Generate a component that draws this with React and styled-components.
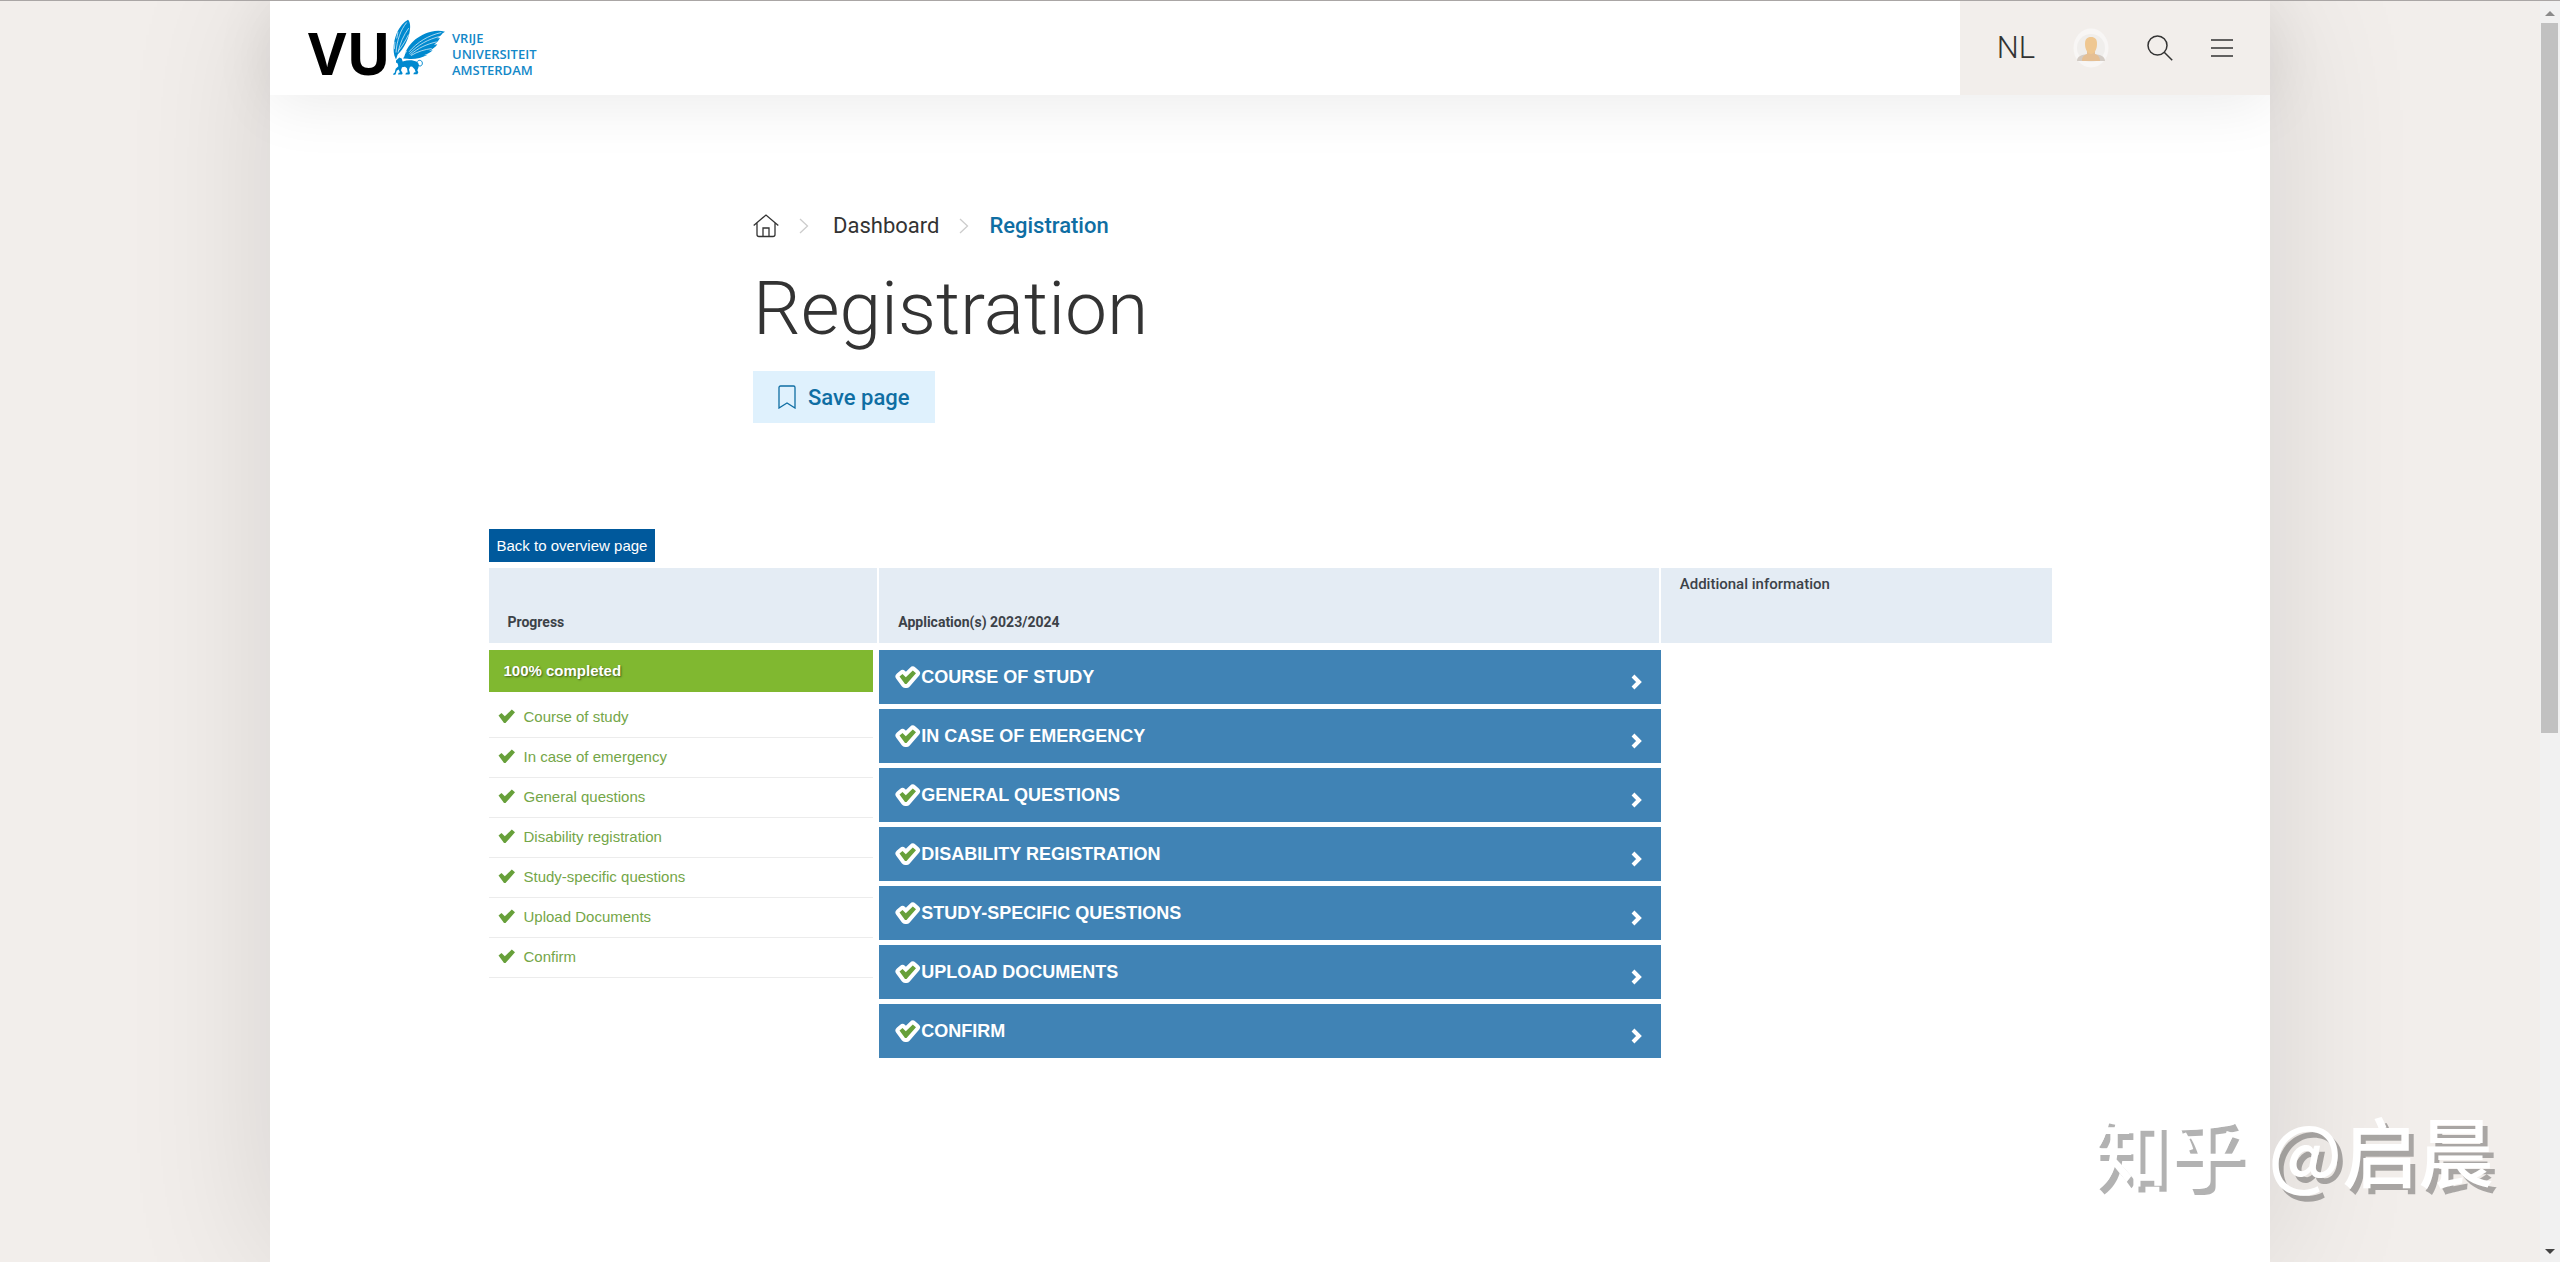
import React from 'react'
import styled, { createGlobalStyle } from 'styled-components'

const STEPS = [
  'Course of study',
  'In case of emergency',
  'General questions',
  'Disability registration',
  'Study-specific questions',
  'Upload Documents',
  'Confirm',
]

const TICK = 'M.5 6.500 3.500 4 6.800 7.300 13.800.500 17 3.200 7.500 14H6z'

const Griffin = () => (
  <svg width="52" height="57" viewBox="25 16 156 170" fill="#0089cf">
    {/* wings */}
    <path d="M70 18c-12 6-25 21-34 41-8 19-12 44-7 66l5 12 5-15c9-7 18-20 25-35 9-19 14-38 12-55-1-7-3-11-6-14z" />
    <path d="M181 54c-13-4-27-4-42 0-23 6-44 18-59 34-11 12-18 24-21 40l-4 6 14 1c20 2 42-2 60-12l-12 1c12-4 21-9 27-15l-11 2c12-6 20-12 25-20l-10 2c10-7 15-14 18-21l-8 2c8-6 13-12 15-15z" />
    {/* body and legs */}
    <path d="M34 140l10-9 7 3 3 9c16-6 32-5 43 1 6 4 7 11 4 18l-3 7 3 6-3 6H86l2-5 5-1-3-9-8-8-6 1-3 9 3 10-2 4H62l2-5 5-1-2-13-6-4-9 1-3 9 5 9-2 4H40l2-5 4-1-4-9-6 4-3 10-2 2h-6l2-5 3-1 3-12 8-8-2-8-5-3z" />
    <path
      d="M97 151c8 10 17 5 16-4-1-8-10-10-15-4"
      fill="none"
      stroke="#0089cf"
      strokeWidth="3"
    />
    {/* gaps between the feathers */}
    <g fill="none" stroke="#fff" strokeWidth="2">
      <path d="M66 26C48 48 37 78 34 116" />
      <path d="M72 43C57 64 46 88 40 116" />
      <path d="M72 62c-9 18-19 34-30 48" />
      <path d="M40 54l-4 20M31 84l-2 22" />
      <path d="M170 56c-40 9-72 29-97 58" />
      <path d="M168 67c-38 9-68 26-94 53" />
      <path d="M156 84c-30 7-55 18-79 39" />
      <path d="M141 104c-21 3-42 9-62 21" />
      <path d="M55 128l11-16M52 136l12 2" />
    </g>
  </svg>
)

const HomeIcon = () => (
  <svg width="26" height="24" viewBox="0 0 26 24" fill="none" stroke="#333" strokeWidth="1.3">
    <path d="M.7 11.6 13 1l12.300 10.600M4 9.200V20.500a2 2 0 0 0 2 2h14a2 2 0 0 0 2-2V9.200M10 22.500V14h6v8.500" />
  </svg>
)

const Chevron = () => (
  <svg width="10" height="16" viewBox="0 0 10 16" fill="none" stroke="#ccc" strokeWidth="1.3">
    <path d="M1 1l7.500 7L1 15" />
  </svg>
)

const BookmarkIcon = () => (
  <svg width="18" height="24" viewBox="0 0 18 24" fill="none" stroke="#0f6ea3" strokeWidth="1.3">
    <path d="M1 23V2.500A1.500 1.500 0 0 1 2.500 1h13A1.500 1.500 0 0 1 17 2.500V23l-8-5z" />
  </svg>
)

const AvatarIcon = () => (
  <svg width="36" height="40" viewBox="0 0 36 40">
    <ellipse cx="18" cy="20" rx="17.500" ry="19.500" fill="#f8f6f5" />
    <circle cx="18" cy="20" r="14" fill="#f0eeec" />
    <path d="M4 33c0-5 5-6 10-7v-4h8v4c5 1 10 2 10 7z" fill="#d3cbc4" />
    <path d="M9 33c0-4 2-6 5-7v-4h8v4c3 1 5 3 5 7z" fill="#e5bf94" />
    <path d="M12 16c0-5 2-7 6-7s6 2 6 7c0 6-3 10-6 10s-6-4-6-10z" fill="#efc791" />
  </svg>
)

const SearchIcon = () => (
  <svg width="26" height="26" viewBox="0 0 26 26" fill="none" stroke="#333" strokeWidth="1.500">
    <circle cx="10.500" cy="10.500" r="9.500" />
    <path d="M17.200 17.200l8 8" />
  </svg>
)

const MenuIcon = () => (
  <svg width="22" height="18" viewBox="0 0 22 18" stroke="#333" strokeWidth="1.600">
    <path d="M0 1h22M0 9h22M0 17h22" />
  </svg>
)

const Tick = () => (
  <svg width="18" height="15" viewBox="0 0 18 15">
    <path d={TICK} fill="#67a03a" />
  </svg>
)

const OutlinedTick = () => (
  <svg width="26" height="23" viewBox="-4 -4 26 23">
    <path d={TICK} fill="#fff" stroke="#fff" strokeWidth="8" strokeLinejoin="round" />
    <path d={TICK} fill="#67a03a" />
  </svg>
)

const BarArrow = () => (
  <svg width="11" height="16" viewBox="0 0 11 16" fill="none" stroke="#fff" strokeWidth="4">
    <path d="M2 2l6 6-6 6" />
  </svg>
)

const App = () => (
  <Screen>
    <GlobalStyle />
    <Backdrop>
      <Page>
        <Header>
          <Logo href="#home" aria-label="VU Vrije Universiteit Amsterdam">
            <LogoLetters>VU</LogoLetters>
            <Griffin />
            <LogoName>
              VRIJE
              <br />
              UNIVERSITEIT
              <br />
              AMSTERDAM
            </LogoName>
          </Logo>
          <Tools>
            <Language href="#nl">NL</Language>
            <ToolButton aria-label="Account">
              <AvatarIcon />
            </ToolButton>
            <ToolButton aria-label="Search">
              <SearchIcon />
            </ToolButton>
            <ToolButton aria-label="Menu">
              <MenuIcon />
            </ToolButton>
          </Tools>
        </Header>

        <Intro>
          <Breadcrumb aria-label="Breadcrumb">
            <Crumb href="#home" aria-label="Home">
              <HomeIcon />
            </Crumb>
            <Chevron />
            <Crumb href="#dashboard" $indent>
              Dashboard
            </Crumb>
            <Chevron />
            <Crumb href="#registration" $current>
              Registration
            </Crumb>
          </Breadcrumb>
          <Title>Registration</Title>
          <SaveButton>
            <BookmarkIcon />
            Save page
          </SaveButton>
        </Intro>

        <Application>
          <BackButton>Back to overview page</BackButton>
          <Columns>
            <Column>
              <ColumnHead $gap>Progress</ColumnHead>
              <Completed>100% completed</Completed>
              <StepList>
                {STEPS.map(step => (
                  <Step key={step}>
                    <Tick />
                    {step}
                  </Step>
                ))}
              </StepList>
            </Column>

            <Column>
              <ColumnHead $gap>Application(s) 2023/2024</ColumnHead>
              <Bars>
                {STEPS.map(step => (
                  <Bar key={step}>
                    <OutlinedTick />
                    <BarLabel>{step}</BarLabel>
                    <ArrowSlot>
                      <BarArrow />
                    </ArrowSlot>
                  </Bar>
                ))}
              </Bars>
            </Column>

            <Column>
              <ColumnHead $top>Additional information</ColumnHead>
            </Column>
          </Columns>
        </Application>
      </Page>
    </Backdrop>

    <Scrollbar aria-hidden="true">
      <ScrollArrow viewBox="0 0 20 22">
        <path d="M5 15l5-5 5 5z" fill="#8b8b8b" />
      </ScrollArrow>
      <Thumb />
      <Track />
      <ScrollArrow viewBox="0 0 20 22">
        <path d="M5 9l5 5 5-5z" fill="#444" />
      </ScrollArrow>
    </Scrollbar>

    <Watermark>
      <span>知乎</span>
      <span>@启晨</span>
    </Watermark>
  </Screen>
)

const GlobalStyle = createGlobalStyle`
  * {
    box-sizing: border-box;
  }

  body {
    margin: 0;
    font-family: Roboto, sans-serif;
    color: #333;
    background: #f2eeeb;
  }

  a {
    color: inherit;
    text-decoration: none;
  }

  button {
    padding: 0;
    border: 0;
    background: none;
    font: inherit;
    color: inherit;
    cursor: pointer;
  }

  svg {
    display: block;
    flex-shrink: 0;
  }
`

const Screen = styled.div`
  position: relative;
  display: flex;
  min-height: 100vh;
  border-top: 1px solid #aaa6a5;
`

const Backdrop = styled.div`
  flex: 1;
  display: flex;
  justify-content: center;
  overflow: hidden;
`

const Page = styled.div`
  width: 100%;
  max-width: 2000px;
  background: #fff;
  box-shadow: 0 0 140px rgba(0, 0, 0, 0.12);
`

const Header = styled.header`
  display: flex;
  justify-content: space-between;
  height: 94px;
  background: #fff;
  box-shadow: 0 10px 60px rgba(0, 0, 0, 0.08);
`

const Logo = styled.a`
  display: flex;
  align-items: flex-start;
  padding: 18px 0 0 38px;
`

const LogoLetters = styled.span`
  margin-top: 11px;
  width: 85px;
  font-family: 'Open Sans', sans-serif;
  font-size: 59px;
  font-weight: 700;
  line-height: 44px;
  color: #000;
`

const LogoName = styled.span`
  margin: 11px 0 0 7px;
  font-family: 'Open Sans', sans-serif;
  font-size: 13px;
  font-weight: 600;
  line-height: 16px;
  color: #1488c8;
`

const Tools = styled.div`
  display: flex;
  align-items: center;
  gap: 38px;
  padding: 0 37px;
  background: #f2eeeb;
`

const Language = styled.a`
  font-size: 31px;
  font-weight: 300;
  line-height: 36px;
`

const ToolButton = styled.button`
  display: flex;
`

const Intro = styled.section`
  width: 100%;
  max-width: 1034px;
  margin: 0 auto;
  padding-top: 115px;
`

const Breadcrumb = styled.nav`
  display: flex;
  align-items: center;
  gap: 20px;
  height: 32px;
`

const Crumb = styled.a`
  margin-left: ${p => (p.$indent ? 4 : 0)}px;
  font-size: 22px;
  font-weight: ${p => (p.$current ? 500 : 400)};
  line-height: 32px;
  color: ${p => (p.$current ? '#0f6ea3' : '#333')};
`

const Title = styled.h1`
  margin: 20px 0 17px;
  font-size: 75px;
  font-weight: 300;
  line-height: 92px;
`

const SaveButton = styled.button`
  display: flex;
  align-items: center;
  gap: 12px;
  height: 52px;
  padding: 0 25px;
  background: #dff1fd;
  font-size: 22px;
  font-weight: 500;
  color: #0f6ea3;
`

const Application = styled.section`
  width: 100%;
  max-width: 1563px;
  margin: 106px auto 0;
  font-family: 'Liberation Sans', Arial, sans-serif;
  font-size: 15px;
`

const BackButton = styled.button`
  display: block;
  height: 33px;
  padding: 0 8px;
  background: #00599c;
  color: #fff;
`

const Columns = styled.div`
  display: grid;
  grid-template-columns: 1fr 2fr 1fr;
  margin-top: 6px;
`

const Column = styled.div``

const ColumnHead = styled.h2`
  display: flex;
  align-items: ${p => (p.$top ? 'flex-start' : 'flex-end')};
  height: 75px;
  margin: 0 ${p => (p.$gap ? 2 : 0)}px 7px 0;
  padding: 6px 19px 11px;
  background: #e4ecf4;
  font-family: Roboto, sans-serif;
  font-size: ${p => (p.$top ? 15 : 14)}px;
  font-weight: ${p => (p.$top ? 500 : 700)};
  line-height: 20px;
  color: #3c4248;
`

const Completed = styled.div`
  margin-right: 6px;
  padding: 0 15px;
  background: #80b830;
  font-weight: 700;
  line-height: 42px;
  color: #fff;
  text-shadow: 1px 1px 2px rgba(0, 0, 0, 0.5);
`

const StepList = styled.ul`
  margin: 6px 6px 0 0;
  padding: 0;
  list-style: none;
`

const Step = styled.li`
  display: flex;
  align-items: center;
  gap: 8px;
  height: 40px;
  padding: 0 0 2px 9px;
  border-bottom: 1px solid #ececec;
  color: #74a648;
`

const Bars = styled.div`
  display: grid;
  gap: 5px;
`

const Bar = styled.button`
  display: flex;
  align-items: center;
  height: 54px;
  padding: 0 19px 0 16px;
  background: #4083b5;
  color: #fff;
`

const BarLabel = styled.span`
  flex: 1;
  text-align: left;
  font-size: 18px;
  font-weight: 700;
  text-transform: uppercase;
`

const ArrowSlot = styled.span`
  padding-top: 10px;
`

const Scrollbar = styled.div`
  display: flex;
  flex-direction: column;
  width: 20px;
  background: #f1f1f1;
`

const ScrollArrow = styled.svg`
  width: 20px;
  height: 22px;
`

const Thumb = styled.div`
  flex: 7;
  margin: 0 2px 0 1px;
  background: #c1c1c1;
`

const Track = styled.div`
  flex: 5;
`

const Watermark = styled.div`
  position: absolute;
  right: 66px;
  bottom: 59px;
  display: flex;
  gap: 24px;
  font-family: 'Noto Sans CJK SC', sans-serif;
  font-size: 76px;
  font-weight: 500;
  line-height: 108px;
  color: #fff;
  text-shadow: 5px 6px 0 rgba(0, 0, 0, 0.3);
`

export default App
